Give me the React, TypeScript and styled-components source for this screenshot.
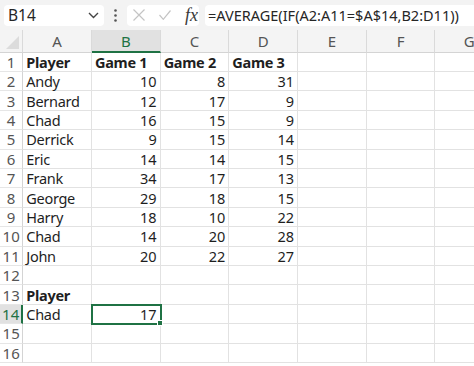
import React from "react";
import styled, { createGlobalStyle } from "styled-components";

const GlobalStyle = createGlobalStyle`
  html, body {
    margin: 0;
    padding: 0;
    background: #ffffff;
    overflow: hidden;
  }
  body {
    font-family: "Noto Sans", "Open Sans", sans-serif;
  }
`;

const Page = styled.div`
  width: 474px;
  height: 366px;
  overflow: hidden;
  background: #ffffff;
`;

const Toolbar = styled.div`
  display: flex;
  align-items: center;
  height: 30px;
  padding: 0 0 0 4px;
  background: #f3f3f3;
  box-sizing: border-box;
  svg {
    flex-shrink: 0;
  }
`;

const NameBox = styled.div`
  display: flex;
  align-items: center;
  justify-content: space-between;
  width: 100px;
  height: 21px;
  padding: 0 5px 0 4px;
  box-sizing: border-box;
  background: #ffffff;
  border-radius: 4px;
  font-size: 15.5px;
  color: #262626;
`;

const Dots = styled.div`
  width: 23px;
  display: flex;
  justify-content: center;
`;

const FxBox = styled.div`
  display: flex;
  align-items: center;
  gap: 14px;
  width: 72px;
  height: 21px;
  padding: 0 4px 0 6px;
  box-sizing: border-box;
  background: #ffffff;
  border-radius: 4px;
`;

const Fx = styled.span`
  margin-left: auto;
  font-family: "Liberation Serif", "DejaVu Serif", serif;
  font-style: italic;
  font-size: 18px;
  line-height: 18px;
  color: #3a3a3a;
`;

const FormulaBox = styled.div`
  flex: 1;
  margin-left: 6px;
  height: 21px;
  padding-left: 3px;
  display: flex;
  align-items: center;
  background: #ffffff;
  border-radius: 4px 0 0 4px;
  font-size: 14.5px;
  color: #262626;
  white-space: nowrap;
`;

const Sheet = styled.div`
  display: grid;
  grid-template-columns: 23.3px repeat(7, 68.7px);
  grid-auto-rows: 19.4px;
  grid-template-rows: 22.7px;
`;

const Corner = styled.div`
  position: relative;
  background: #f4f4f4;
  border-right: 1px solid #dadada;
  border-bottom: 1px solid #d4d4d4;
  box-sizing: border-box;
  &::after {
    content: "";
    position: absolute;
    right: 3px;
    bottom: 3px;
    border-style: solid;
    border-width: 0 0 13px 13px;
    border-color: transparent transparent #dcdcdc transparent;
  }
`;

const ColHead = styled.div<{ $active?: boolean }>`
  display: flex;
  align-items: center;
  justify-content: center;
  background: ${(p) => (p.$active ? "#e1e1e1" : "#f4f4f4")};
  color: ${(p) => (p.$active ? "#1f7244" : "#555555")};
  border-right: 1px solid #dadada;
  border-bottom: ${(p) => (p.$active ? "2px solid #1f7244" : "1px solid #d4d4d4")};
  box-sizing: border-box;
  font-size: 15px;
  padding-top: 1px;
`;

const RowHead = styled.div<{ $active?: boolean }>`
  display: flex;
  align-items: center;
  justify-content: center;
  background: ${(p) => (p.$active ? "#e1e1e1" : "#ffffff")};
  color: ${(p) => (p.$active ? "#1f7244" : "#555555")};
  border-right: ${(p) => (p.$active ? "2px solid #1f7244" : "1px solid #d4d4d4")};
  border-bottom: 1px solid #e6e6e6;
  box-sizing: border-box;
  font-size: 15px;
`;

const Cell = styled.div<{ $num?: boolean; $bold?: boolean; $selected?: boolean }>`
  position: relative;
  display: flex;
  align-items: center;
  justify-content: ${(p) => (p.$num ? "flex-end" : "flex-start")};
  padding: 0 3px;
  border-right: 1px solid #e2e2e2;
  border-bottom: 1px solid #e2e2e2;
  box-sizing: border-box;
  font-size: 14.5px;
  letter-spacing: ${(p) => (p.$num ? "0" : "-0.3px")};
  font-weight: ${(p) => (p.$bold ? 700 : 400)};
  color: #1e1e1e;
  white-space: nowrap;
  overflow: visible;
  ${(p) =>
    p.$selected &&
    `
    outline: 2px solid #1f7244;
    outline-offset: -1px;
    z-index: 1;
    &::after {
      content: "";
      position: absolute;
      right: -3px;
      bottom: -3px;
      width: 4px;
      height: 4px;
      background: #1f7244;
      border: 1px solid #ffffff;
    }
  `}
`;

const cols = ["A", "B", "C", "D", "E", "F", "G"];

type Row = (string | number)[];

const rows: Row[] = [
  ["Player", "Game 1", "Game 2", "Game 3"],
  ["Andy", 10, 8, 31],
  ["Bernard", 12, 17, 9],
  ["Chad", 16, 15, 9],
  ["Derrick", 9, 15, 14],
  ["Eric", 14, 14, 15],
  ["Frank", 34, 17, 13],
  ["George", 29, 18, 15],
  ["Harry", 18, 10, 22],
  ["Chad", 14, 20, 28],
  ["John", 20, 22, 27],
  [],
  ["Player"],
  ["Chad", 17],
  [],
  [],
];

const App: React.FC = () => {
  return (
    <Page>
      <GlobalStyle />
      <Toolbar>
        <NameBox>
          <span>B14</span>
          <svg width="11" height="7" viewBox="0 0 11 7">
            <path d="M1 1 L5.5 5.5 L10 1" fill="none" stroke="#444" strokeWidth="1.4" />
          </svg>
        </NameBox>
        <Dots>
          <svg width="3" height="13" viewBox="0 0 3 13">
            <circle cx="1.5" cy="1.5" r="1.3" fill="#555" />
            <circle cx="1.5" cy="6.5" r="1.3" fill="#555" />
            <circle cx="1.5" cy="11.5" r="1.3" fill="#555" />
          </svg>
        </Dots>
        <FxBox>
          <svg width="12" height="12" viewBox="0 0 12 12">
            <path d="M0.5 0.5 L11.5 11.5 M11.5 0.5 L0.5 11.5" stroke="#c4c4c4" strokeWidth="1.2" />
          </svg>
          <svg width="12" height="10" viewBox="0 0 12 10">
            <path d="M0.5 5 L4.3 9.3 L11.5 0.5" fill="none" stroke="#c4c4c4" strokeWidth="1.2" />
          </svg>
          <Fx>fx</Fx>
        </FxBox>
        <FormulaBox>=AVERAGE(IF(A2:A11=$A$14,B2:D11))</FormulaBox>
      </Toolbar>
      <Sheet>
        <Corner />
        {cols.map((c) => (
          <ColHead key={c} $active={c === "B"}>
            {c}
          </ColHead>
        ))}
        {rows.map((r, i) => (
          <React.Fragment key={i}>
            <RowHead $active={i === 13}>{i + 1}</RowHead>
            {cols.map((c, j) => {
              const v = r[j];
              const bold = i === 0 || i === 12;
              return (
                <Cell
                  key={c}
                  $num={typeof v === "number"}
                  $bold={bold}
                  $selected={i === 13 && j === 1}
                >
                  {v ?? ""}
                </Cell>
              );
            })}
          </React.Fragment>
        ))}
      </Sheet>
    </Page>
  );
};

export default App;
